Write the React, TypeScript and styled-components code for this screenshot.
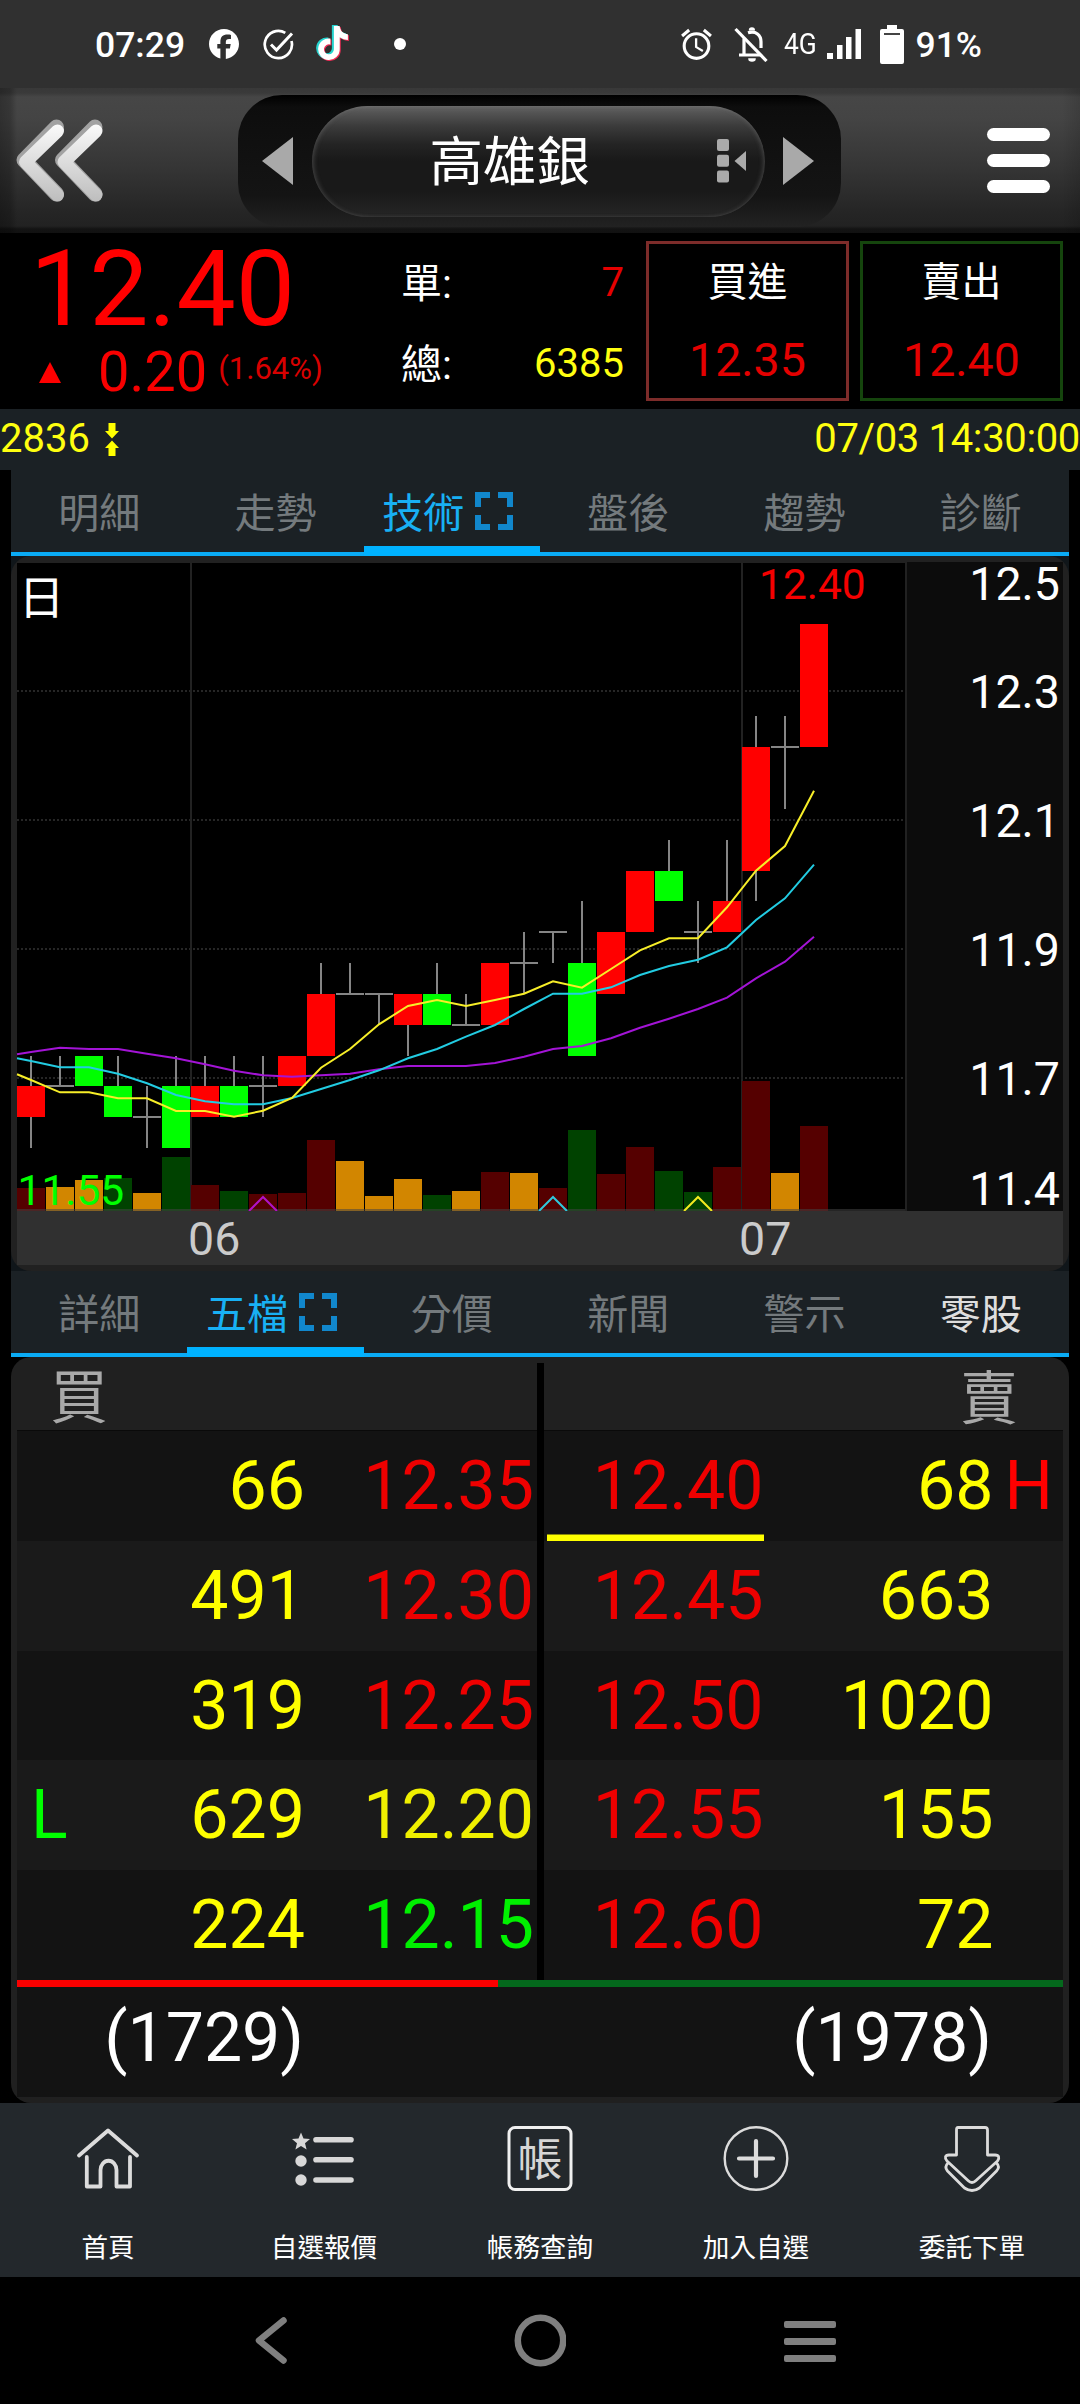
import React from 'react';
import styled, { createGlobalStyle } from 'styled-components';
import { FaFacebook, FaTiktok } from 'react-icons/fa6';
import { MdAlarm } from 'react-icons/md';

const RED = '#ff0000';
const GREEN = '#00ff00';
const YELLOW = '#ffff00';
const BLUE = '#00b2ff';

const GlobalStyle = createGlobalStyle`
  * { box-sizing: border-box; }
  body {
    margin: 0;
    background: #000;
    color: #fff;
    font-family: Roboto, 'Noto Sans CJK TC', sans-serif;
  }
  svg { display: block; flex: none; }
`;

const Screen = styled.div`
  width: 1080px;
  height: 2404px;
  display: flex;
  flex-direction: column;
  overflow: hidden;
  background: #000;
`;

/* ---------- status bar ---------- */

const StatusBar = styled.div`
  height: 88px;
  flex: none;
  background: #303030;
  display: flex;
  justify-content: space-between;
  align-items: center;
  padding: 0 98px 0 95px;
`;

const Notifications = styled.div`
  display: flex;
  align-items: center;
  gap: 24px;
`;

const Indicators = styled.div`
  display: flex;
  align-items: center;
`;

const Indicator = styled.div<{ $before: number }>`
  flex: none;
  margin-left: ${(p) => p.$before}px;
`;

const StatusText = styled.span`
  display: block;
  font-size: 35.5px;
  font-weight: 500;
  line-height: 44px;
  padding-top: 2px;
`;

const NetworkType = styled.span`
  display: block;
  width: 33px;
  font-size: 30px;
  line-height: 44px;
  transform: scaleX(0.88);
  transform-origin: left;
`;

const TikTokMark = styled.span`
  display: block;
  width: 34px;
  height: 36px;
  margin-left: -2px;
  font-size: 34px;
  line-height: 0;
  color: #fff;
  filter: drop-shadow(-1.5px -1px 0 #25d4cf) drop-shadow(1.5px 1px 0 #f02c56);
`;

const NotificationDot = styled.span`
  width: 12px;
  height: 12px;
  margin-left: 20px;
  border-radius: 50%;
  background: #fff;
`;

/* ---------- title bar ---------- */

const TitleBar = styled.header`
  height: 145px;
  flex: none;
  display: flex;
  align-items: center;
  padding: 0 30px 0 15px;
  background:
    linear-gradient(90deg, rgba(0, 0, 0, 0.3) 0, rgba(0, 0, 0, 0.22) 10px, transparent 17px, transparent 1062px, rgba(0, 0, 0, 0.12) 1080px),
    linear-gradient(180deg, #383838 0, #3a3a3a 5px, #464646 9px, #444 30px, #353535 80px, #252525 125px, #222 138px, #131313 141px, #111 145px);
`;

const Switcher = styled.div`
  width: 603px;
  height: 132px;
  margin: 1px 0 0 135px;
  display: flex;
  align-items: center;
  justify-content: space-between;
  padding: 0 27px 0 24px;
  border-radius: 44px;
  background: linear-gradient(180deg, #000 0, #0d0d0d 12px, #111 60px, #141414 100px, #222 132px);
`;

const SymbolPill = styled.div`
  width: 453px;
  height: 111px;
  display: flex;
  align-items: center;
  padding: 0 18px 0 118px;
  border-radius: 56px;
  background: linear-gradient(180deg, #666 0, #555 6px, #3b3b3b 20px, #242424 38px, #191919 55px, #191919 85px, #262626 111px);
  box-shadow: inset 3px 0 5px -2px rgba(150, 150, 150, 0.4), inset -3px 0 5px -2px rgba(150, 150, 150, 0.4);
`;

const SymbolName = styled.h1`
  margin: 3px 0 0;
  width: 288px;
  font-size: 53.5px;
  font-weight: 400;
  line-height: 64px;
`;

const MenuBars = styled.div`
  display: flex;
  flex-direction: column;
  gap: 13px;
  width: 63px;
  margin-left: auto;
  i {
    height: 13px;
    border-radius: 7px;
    background: #fff;
  }
`;

/* ---------- quote ---------- */

const Quote = styled.section`
  height: 176px;
  flex: none;
  display: flex;
`;

const PriceBlock = styled.div`
  width: 403px;
  display: flex;
  flex-direction: column;
`;

const LastPrice = styled.div`
  padding-left: 30px;
  font-size: 105.5px;
  line-height: 112px;
  color: ${RED};
`;

const ChangeRow = styled.div`
  height: 54px;
  display: flex;
  align-items: center;
  padding-left: 39px;
  color: #f80000;
`;

const Change = styled.span`
  margin-left: 37px;
  font-size: 56px;
  line-height: 54px;
`;

const Percent = styled.span`
  margin-left: 11px;
  padding-bottom: 7px;
  font-size: 31px;
  line-height: 40px;
  color: #d80000;
`;

const VolumeBlock = styled.div`
  width: 221px;
  padding-top: 9px;
`;

const VolumeRow = styled.div<{ $color: string }>`
  height: 81px;
  display: flex;
  align-items: center;
  justify-content: space-between;
  font-size: 40px;
  color: ${(p) => p.$color};
`;

const VolumeLabel = styled.span`
  margin: 0 0 5px -2px;
  font-size: 41px;
  color: #fff;
`;

const TradeButtons = styled.div`
  display: flex;
  gap: 11px;
  padding: 8px 0 0 22px;
`;

const TradeButton = styled.button<{ $edge: string }>`
  width: 203px;
  height: 160px;
  padding: 0;
  border: 3px solid ${(p) => p.$edge};
  background: #000;
  color: #fff;
  font-family: inherit;
  font-size: 40px;
  line-height: 78px;
  display: flex;
  flex-direction: column;
  align-items: center;
  b {
    font-weight: 400;
    font-size: 46.5px;
    line-height: 76px;
    color: #e40000;
  }
`;

const InfoBar = styled.div`
  height: 61px;
  flex: none;
  display: flex;
  align-items: center;
  padding-bottom: 2px;
  background: #1b2125;
  color: #ffff10;
  font-size: 40px;
  svg { margin: 2px auto 0 15px; }
`;

const QuoteTime = styled.span`
  letter-spacing: -0.35px;
`;

/* ---------- tabs ---------- */

const Tabs = styled.nav`
  height: 86px;
  flex: none;
  margin: 0 11px;
  display: grid;
  grid-template-columns: repeat(6, 1fr);
  background: #1b2125;
  box-shadow: inset 0 -4px 0 #0aabf5;
`;

const Tab = styled.div<{ $tone: 'dim' | 'active' | 'bright' }>`
  display: flex;
  align-items: center;
  justify-content: center;
  gap: 11px;
  padding: ${(p) => (p.$tone === 'active' ? '11px 8px 0 0' : '2px 0 0')};
  border-bottom: ${(p) => (p.$tone === 'active' ? `10px solid ${BLUE}` : '0')};
  font-size: 41px;
  line-height: 60px;
  font-weight: 400;
  color: ${(p) => ({ dim: '#747a7d', active: '#18b0f4', bright: '#dedede' })[p.$tone]};
  svg { margin-bottom: 5px; }
`;

/* ---------- chart ---------- */

const ChartFrame = styled.section`
  height: 715px;
  flex: none;
  margin: 0 11px;
  padding: 6px;
  display: grid;
  grid-template-columns: 890px 156px;
  grid-template-rows: 649px 54px;
  border-radius: 20px;
  background: #212121;
`;

const ChartBack = styled.div`
  flex: none;
  background: linear-gradient(90deg, #000 11px, #10161a 11px, #10161a 1069px, #000 1069px);
`;

const Plot = styled.svg`
  overflow: visible;
`;

const PriceAxis = styled.div`
  display: flex;
  flex-direction: column;
  align-items: flex-end;
  padding: 1px 3px 0 0;
  background: #0c0c0c;
  font-size: 46.5px;
`;

const AxisLabel = styled.span<{ $edge?: 'top' | 'bottom' }>`
  line-height: ${(p) => (p.$edge ? 43 : 129)}px;
  margin-bottom: ${(p) => (p.$edge === 'top' ? 22 : 0)}px;
  margin-top: ${(p) => (p.$edge === 'bottom' ? 'auto' : 0)};
`;

const DateAxis = styled.div`
  grid-column: 1 / -1;
  display: grid;
  grid-template-columns: 551px 1fr;
  padding-left: 171px;
  background: #303030;
  color: #cbcbcb;
  font-size: 46.5px;
  line-height: 56px;
`;

/* ---------- order book ---------- */

const BookFrame = styled.section`
  height: 746px;
  flex: none;
  margin: 0 11px;
  padding: 6px;
  border-radius: 20px;
  background: #202020;
`;

const BookSides = styled.div`
  display: grid;
  grid-template-columns: 1fr 1fr;
  column-gap: 7px;
  background: #000;
`;

const BookHead = styled.div<{ $side: 'bid' | 'ask' }>`
  height: 68px;
  display: flex;
  align-items: center;
  justify-content: ${(p) => (p.$side === 'bid' ? 'flex-start' : 'flex-end')};
  padding: ${(p) => (p.$side === 'bid' ? '2px 0 0 33px' : '4px 45px 0 0')};
  border-bottom: 1px solid #0a0a0a;
  background: #202020;
  color: #a9a9a9;
  font-size: 58px;
  line-height: 60px;
`;

const BookRow = styled.div<{ $side: 'bid' | 'ask'; $odd: boolean }>`
  display: grid;
  grid-template-columns: ${(p) => (p.$side === 'bid' ? '58px 230px 229px' : '3px 217px 230px 69px')};
  grid-template-rows: 100%;
  height: 109.8px;
  background: ${(p) => (p.$odd ? '#131313' : '#1a1a1a')};
  font-size: 68px;
  line-height: 111px;
`;

const Cell = styled.span<{ $color: string; $mark?: boolean }>`
  text-align: right;
  color: ${(p) => p.$color};
  box-shadow: ${(p) => (p.$mark ? 'inset 0 -6.5px 0 #ffff00' : 'none')};
`;

const Flag = styled.span<{ $color: string; $indent: number }>`
  color: ${(p) => p.$color};
  padding-left: ${(p) => p.$indent}px;
`;

const RatioBar = styled.div`
  height: 7px;
  display: flex;
  background: #04681c;
  i { background: #fb0000; }
`;

const Totals = styled.div`
  height: 110px;
  display: grid;
  grid-template-columns: 287px 688px;
  background: #131313;
  font-size: 68px;
  line-height: 103px;
  text-align: right;
`;

/* ---------- bottom bars ---------- */

const AppNav = styled.nav`
  height: 174px;
  flex: none;
  display: grid;
  grid-template-columns: repeat(5, 1fr);
  background: #23282c;
`;

const NavItem = styled.div`
  display: flex;
  flex-direction: column;
  align-items: center;
  padding-top: 20px;
  font-size: 26.6px;
  line-height: 40px;
  span { margin-top: 33px; }
`;

const SystemNav = styled.div`
  height: 127px;
  flex: none;
  display: flex;
  justify-content: center;
  gap: 218px;
  padding-top: 32px;
`;

/* ---------- icons ---------- */

const DoubleChevron = () => (
  <svg width="88" height="84" viewBox="0 0 88 84" fill="none" strokeLinecap="round" strokeLinejoin="round">
    <defs>
      <linearGradient id="steel" gradientUnits="userSpaceOnUse" x1="0" y1="0" x2="0" y2="84">
        <stop offset="0" stopColor="#ffffff" />
        <stop offset="1" stopColor="#bcbcbc" />
      </linearGradient>
    </defs>
    <g stroke="#a2a2a2" strokeWidth="15">
      <path d="M41.500 8 9 41 41.500 75" />
      <path d="M80 8 47.500 41 80 75" />
    </g>
    <g stroke="url(#steel)" strokeWidth="13">
      <path d="M42.500 12 10.500 43 42.500 76" />
      <path d="M81 12 49 43 81 76" />
    </g>
  </svg>
);

const Expand = () => (
  <svg width="38" height="38" viewBox="0 0 38 38" fill="none" stroke="#1187cc" strokeWidth="6">
    <path d="M3 15V3h12M23 3h12v12M35 23v12H23M15 35H3V23" />
  </svg>
);

const TaskCheck = () => (
  <svg width="31" height="31" viewBox="0 0 31 31" fill="none" stroke="#fff" strokeWidth="2.700">
    <path d="M22.300 3.800A13.600 13.600 0 1 0 28.500 12" />
    <path d="M8 15.500l5.500 5.500L29 4.500" strokeWidth="3" />
  </svg>
);

const BellOff = () => (
  <svg width="34" height="35" viewBox="0 0 34 35" fill="none" stroke="#fff" strokeWidth="3.200">
    <path d="M1.500 2 32.500 34" />
    <path d="M10 11.500V27M5 28h22" />
    <path d="M14 5.800c8-2.500 13 2.500 13 9V21" />
    <path d="M15.500 3.500a2.400 2.400 0 0 1 4.800 0M15 32a3 2 0 0 0 6 0z" fill="#fff" strokeWidth="1.500" />
  </svg>
);

const Signal = () => (
  <svg width="34" height="30" viewBox="0 0 34 30" fill="#fff">
    <path d="M0 24h6v6H0zM10 16h5.500v14H10zM19 8h5.500v22H19zM28.500 0H34v30h-5.500z" />
  </svg>
);

const Battery = () => (
  <svg width="24" height="39" viewBox="0 0 24 39">
    <path d="M7 0h10v4h5a2 2 0 0 1 2 2v31a2 2 0 0 1-2 2H2a2 2 0 0 1-2-2V6a2 2 0 0 1 2-2h5z" fill="#fff" />
    <path d="M4 9h16" stroke="#444" strokeWidth="2" />
  </svg>
);

const ListToggle = () => (
  <svg width="30" height="44" viewBox="0 0 30 44" fill="#aaa">
    <rect x="0" y="0" width="12" height="12" rx="2" />
    <rect x="0" y="15.700" width="12" height="12" rx="2" />
    <rect x="0" y="31.400" width="12" height="12" rx="2" />
    <path d="M29 12v20L17.500 22z" />
  </svg>
);

const NavSvg = ({ children }: { children: React.ReactNode }) => (
  <svg width="72" height="72" viewBox="0 0 72 72" fill="none" stroke="#dcdcdc" strokeWidth="3.800" strokeLinecap="round" strokeLinejoin="round">
    {children}
  </svg>
);

const navItems = [
  {
    label: '首頁',
    icon: (
      <NavSvg>
        <path d="M7 32.500 36 7.500l29 25" />
        <path d="M14.800 34v29.500H28.500V47a7.800 9 0 0 1 16 0v16.500H58V34" />
      </NavSvg>
    ),
  },
  {
    label: '自選報價',
    icon: (
      <NavSvg>
        <g fill="#d8d8d8" stroke="none">
          <path d="M13 9.500l2.500 6 6.500.5-5 4.200 1.600 6.300L13 23l-5.600 3.500L9 20.200 4 16l6.500-.5z" />
          <circle cx="13" cy="38" r="5.700" />
          <circle cx="13" cy="57" r="5.700" />
        </g>
        <path d="M28 16.700h35M28 36.700h35M28 57h35" strokeWidth="5.600" stroke="#d8d8d8" />
      </NavSvg>
    ),
  },
  {
    label: '帳務查詢',
    icon: (
      <NavSvg>
        <rect x="5" y="4.500" width="62" height="62" rx="6" strokeWidth="3" stroke="#f0f0f0" />
        <text x="36" y="52.500" textAnchor="middle" fontSize="45" fontWeight="400" fill="#d6d6d6" stroke="none" fontFamily="'Noto Sans CJK TC', sans-serif">
          帳
        </text>
      </NavSvg>
    ),
  },
  {
    label: '加入自選',
    icon: (
      <NavSvg>
        <circle cx="36" cy="35.500" r="31.300" strokeWidth="2.400" />
        <path d="M19 35.500h34M36 18v35" strokeWidth="4.200" />
      </NavSvg>
    ),
  },
  {
    label: '委託下單',
    icon: (
      <NavSvg>
        <g strokeWidth="2.800">
          <path d="M22 4.500h27q2.500 0 2.500 2.500v25H59q6 .5 2.500 6L40 57.500q-4 4-8 0L11 38q-4-5.500 2-6h7.500V7q0-2.500 1.500-2.500z" />
          <path d="M12 40q-4 4-.5 8l17 17q7.500 5 15 0l17-17q4-4 0-8" />
        </g>
      </NavSvg>
    ),
  },
];

/* ---------- chart data ---------- */

type Candle = {
  open: number;
  close: number;
  high: number;
  low: number;
  up: boolean;
  vol: number;
  tone: 'r' | 'g' | 'o';
};

// Levels are screen rows; subtracting TOP gives rows of the plot.
const TOP = 562;
const PLOT_H = 649;
const rows: [number, number, number, number, 0 | 1, number, 'r' | 'g' | 'o'][] = [
  [1086, 1117, 1056, 1148, 1, 1188, 'r'],
  [1086, 1086, 1056, 1086, 1, 1187, 'o'],
  [1056, 1086, 1056, 1086, 0, 1180, 'o'],
  [1086, 1117, 1056, 1117, 0, 1178, 'g'],
  [1117, 1117, 1086, 1148, 1, 1193, 'o'],
  [1086, 1148, 1056, 1148, 0, 1157, 'g'],
  [1086, 1117, 1056, 1117, 1, 1185, 'r'],
  [1086, 1117, 1056, 1117, 0, 1191, 'g'],
  [1086, 1086, 1056, 1117, 1, 1194, 'r'],
  [1056, 1086, 1056, 1086, 1, 1193, 'r'],
  [994, 1056, 963, 1056, 1, 1140, 'r'],
  [994, 994, 963, 994, 1, 1161, 'o'],
  [994, 994, 994, 1025, 1, 1196, 'o'],
  [994, 1025, 994, 1056, 1, 1179, 'o'],
  [994, 1025, 963, 1025, 0, 1195, 'g'],
  [1025, 1025, 994, 1025, 1, 1191, 'o'],
  [963, 1025, 963, 1025, 1, 1172, 'r'],
  [963, 963, 932, 994, 1, 1173, 'o'],
  [932, 932, 932, 963, 1, 1188, 'r'],
  [963, 1056, 901, 1056, 0, 1130, 'g'],
  [932, 994, 932, 994, 1, 1174, 'r'],
  [871, 932, 871, 932, 1, 1147, 'r'],
  [871, 901, 840, 901, 0, 1171, 'g'],
  [932, 932, 901, 963, 1, 1192, 'g'],
  [901, 932, 840, 932, 1, 1167, 'r'],
  [747, 871, 716, 901, 1, 1081, 'r'],
  [747, 747, 716, 809, 1, 1173, 'o'],
  [624, 747, 624, 747, 1, 1126, 'r'],
];

const candles: Candle[] = rows.map(([open, close, high, low, up, vol, tone]) => ({
  open: open - TOP,
  close: close - TOP,
  high: high - TOP,
  low: low - TOP,
  up: up === 1,
  vol: vol - TOP,
  tone,
}));

// The first value of each average is where its line enters at the left edge.
const averages = [
  {
    color: '#a314d6',
    ys: [1054.3, 1052, 1047.7, 1049, 1049, 1053.7, 1058.3, 1064.3, 1070.7, 1075.3, 1076.7, 1075.3, 1073.7, 1069.3, 1066, 1066, 1066, 1063, 1056.7, 1049, 1046, 1038.3, 1027.7, 1018.7, 1009, 997.7, 978.3, 961.7, 936.7],
  },
  {
    color: '#22cce2',
    ys: [1058.3, 1061, 1067.3, 1067.3, 1073.7, 1083.3, 1095, 1101.3, 1104.3, 1104.3, 1098, 1089, 1080, 1070.3, 1058.3, 1049, 1036.7, 1025, 1009, 993.7, 993.7, 987.3, 975, 966, 959.7, 947.3, 920, 898.3, 864.7],
  },
  {
    color: '#f7ee28',
    ys: [1074.3, 1080, 1092.3, 1092.3, 1098.3, 1098.3, 1111, 1111, 1116.7, 1110.7, 1098, 1067.7, 1049, 1024.3, 1006, 1000, 1006, 1000, 993.7, 981.3, 987.7, 969, 950.3, 938.3, 938.3, 907.3, 870.7, 846, 790.7],
  },
];

const STEP = 29;
const toPoints = (ys: number[]) => ys.map((y, i) => `${i === 0 ? 0 : 14 + STEP * (i - 1)},${y - TOP}`).join(' ');
const volumeColor = { r: '#550000', g: '#004200', o: '#d28600' };
const markers = [
  { index: 8, color: '#b012c8' },
  { index: 18, color: '#30c8dc' },
  { index: 23, color: '#f2ea20' },
];

const CandleChart = () => (
  <Plot width="890" height={PLOT_H} viewBox={`0 0 890 ${PLOT_H}`}>
    <rect y="1" width="888" height={PLOT_H - 1} fill="#000" />
    {[129, 258, 387, 516].map((y) => (
      <line key={y} x1="0" x2="888" y1={y} y2={y} stroke="#262626" strokeWidth="2" strokeDasharray="2 2" />
    ))}
    <path d={`M174 0V${PLOT_H}M725 0V${PLOT_H}`} stroke="#222" strokeWidth="2" />
    {candles.map((c, i) => (
      <rect key={i} x={STEP * i} y={c.vol} width="28" height={PLOT_H - c.vol} fill={volumeColor[c.tone]} />
    ))}
    {candles.map((c, i) => {
      const x = STEP * i;
      const flat = c.open === c.close;
      return (
        <g key={i}>
          <rect x={x + 13} y={c.high} width="2" height={c.low - c.high} fill="#858585" />
          <rect
            x={x}
            y={flat ? c.open - 1 : c.open}
            width="28"
            height={flat ? 2 : c.close - c.open}
            fill={flat ? '#858585' : c.up ? RED : GREEN}
          />
        </g>
      );
    })}
    {averages.map((a) => (
      <polyline key={a.color} points={toPoints(a.ys)} fill="none" stroke={a.color} strokeWidth="2" />
    ))}
    <rect y={PLOT_H - 2} width="888" height="2" fill="#444" fillOpacity="0.550" />
    {markers.map((m) => {
      const x = 14 + STEP * m.index;
      return (
        <path
          key={m.index}
          d={`M${x - 14} ${PLOT_H} L${x} ${PLOT_H - 14} L${x + 14} ${PLOT_H}`}
          fill="none"
          stroke={m.color}
          strokeWidth="2"
        />
      );
    })}
    <g fontFamily="Roboto, 'Noto Sans CJK TC', sans-serif">
      <text x="1.500" y="52" fontSize="46" fill="#fff">日</text>
      <text x="742" y="37" fontSize="42.500" fill="#f50000">12.40</text>
      <text x="0.500" y="643" fontSize="42.500" fill={GREEN}>11.55</text>
    </g>
  </Plot>
);

/* ---------- order data ---------- */

const bids = [
  { qty: '66', price: '12.35', color: '#ee0000' },
  { qty: '491', price: '12.30', color: '#ee0000' },
  { qty: '319', price: '12.25', color: '#ee0000' },
  { qty: '629', price: '12.20', color: '#f0f000', flag: 'L' },
  { qty: '224', price: '12.15', color: '#00f000' },
];

const asks = [
  { price: '12.40', qty: '68', flag: 'H', mark: true },
  { price: '12.45', qty: '663' },
  { price: '12.50', qty: '1020' },
  { price: '12.55', qty: '155' },
  { price: '12.60', qty: '72' },
];

const BID_SHARE = 0.46;

const TabStrip = ({ labels, active, bright }: { labels: string[]; active: number; bright?: number }) => (
  <Tabs>
    {labels.map((label, i) => (
      <Tab key={label} $tone={i === active ? 'active' : i === bright ? 'bright' : 'dim'}>
        {label}
        {i === active && <Expand />}
      </Tab>
    ))}
  </Tabs>
);

export default function App() {
  return (
    <Screen>
      <GlobalStyle />
      <StatusBar>
        <Notifications>
          <StatusText>07:29</StatusText>
          <FaFacebook size={30} />
          <TaskCheck />
          <TikTokMark>
            <FaTiktok />
          </TikTokMark>
          <NotificationDot />
        </Notifications>
        <Indicators>
          <MdAlarm size={37} />
          <Indicator $before={19}>
            <BellOff />
          </Indicator>
          <Indicator $before={16}>
            <NetworkType>4G</NetworkType>
          </Indicator>
          <Indicator $before={10}>
            <Signal />
          </Indicator>
          <Indicator $before={19}>
            <Battery />
          </Indicator>
          <Indicator $before={12}>
            <StatusText>91%</StatusText>
          </Indicator>
        </Indicators>
      </StatusBar>

      <TitleBar>
        <DoubleChevron />
        <Switcher>
          <svg width="31" height="48" viewBox="0 0 31 48">
            <path d="M31 0v48L0 24z" fill="#a9a9a9" />
          </svg>
          <SymbolPill>
            <SymbolName>高雄銀</SymbolName>
            <ListToggle />
          </SymbolPill>
          <svg width="31" height="48" viewBox="0 0 31 48">
            <path d="M0 0v48l31-24z" fill="#a9a9a9" />
          </svg>
        </Switcher>
        <MenuBars>
          <i />
          <i />
          <i />
        </MenuBars>
      </TitleBar>

      <Quote>
        <PriceBlock>
          <LastPrice>12.40</LastPrice>
          <ChangeRow>
            <svg width="22" height="21" viewBox="0 0 22 21">
              <path d="M11 0 22 21H0z" fill={RED} />
            </svg>
            <Change>0.20</Change>
            <Percent>(1.64%)</Percent>
          </ChangeRow>
        </PriceBlock>
        <VolumeBlock>
          <VolumeRow $color="#e60000">
            <VolumeLabel>單:</VolumeLabel>
            <span>7</span>
          </VolumeRow>
          <VolumeRow $color="#ffff10">
            <VolumeLabel>總:</VolumeLabel>
            <span>6385</span>
          </VolumeRow>
        </VolumeBlock>
        <TradeButtons>
          <TradeButton $edge="#7d2c2a">
            買進<b>12.35</b>
          </TradeButton>
          <TradeButton $edge="#15450d">
            賣出<b>12.40</b>
          </TradeButton>
        </TradeButtons>
      </Quote>

      <InfoBar>
        <span>2836</span>
        <svg width="14" height="33" viewBox="0 0 14 33" fill={YELLOW}>
          <path d="M3.500 0h7v8H14L7 15.500 0 8h3.500zM3.500 33h7v-8H14L7 17.500 0 25h3.500z" />
        </svg>
        <QuoteTime>07/03 14:30:00</QuoteTime>
      </InfoBar>

      <TabStrip labels={['明細', '走勢', '技術', '盤後', '趨勢', '診斷']} active={2} />

      <ChartBack>
        <ChartFrame>
          <CandleChart />
          <PriceAxis>
            <AxisLabel $edge="top">12.5</AxisLabel>
            <AxisLabel>12.3</AxisLabel>
            <AxisLabel>12.1</AxisLabel>
            <AxisLabel>11.9</AxisLabel>
            <AxisLabel>11.7</AxisLabel>
            <AxisLabel $edge="bottom">11.4</AxisLabel>
          </PriceAxis>
          <DateAxis>
            <span>06</span>
            <span>07</span>
          </DateAxis>
        </ChartFrame>
      </ChartBack>

      <TabStrip labels={['詳細', '五檔', '分價', '新聞', '警示', '零股']} active={1} bright={5} />

      <BookFrame>
        <BookSides>
          <div>
            <BookHead $side="bid">買</BookHead>
            {bids.map((b, i) => (
              <BookRow key={b.price} $side="bid" $odd={i % 2 === 0}>
                <Flag $color={GREEN} $indent={14}>{b.flag}</Flag>
                <Cell $color={YELLOW}>{b.qty}</Cell>
                <Cell $color={b.color}>{b.price}</Cell>
              </BookRow>
            ))}
          </div>
          <div>
            <BookHead $side="ask">賣</BookHead>
            {asks.map((a, i) => (
              <BookRow key={a.price} $side="ask" $odd={i % 2 === 0}>
                <span />
                <Cell $color="#ee0000" $mark={a.mark}>{a.price}</Cell>
                <Cell $color={YELLOW}>{a.qty}</Cell>
                <Flag $color={RED} $indent={11}>{a.flag}</Flag>
              </BookRow>
            ))}
          </div>
        </BookSides>
        <RatioBar>
          <i style={{ width: `${BID_SHARE * 100}%` }} />
        </RatioBar>
        <Totals>
          <span>(1729)</span>
          <span>(1978)</span>
        </Totals>
      </BookFrame>

      <AppNav>
        {navItems.map((item) => (
          <NavItem key={item.label}>
            {item.icon}
            <span>{item.label}</span>
          </NavItem>
        ))}
      </AppNav>

      <SystemNav>
        <svg width="52" height="62" viewBox="0 0 52 62" fill="none" stroke="#7f7f7f" strokeWidth="6.500" strokeLinecap="round" strokeLinejoin="round">
          <path d="M39.500 11.500 15 31.500l24.500 20" />
        </svg>
        <svg width="52" height="62" viewBox="0 0 52 62" fill="none" stroke="#7f7f7f" strokeWidth="6.500">
          <circle cx="26.500" cy="31.500" r="22.700" />
        </svg>
        <svg width="52" height="62" viewBox="0 0 52 62" fill="#7f7f7f">
          <rect y="12" width="52" height="7" rx="2" />
          <rect y="29" width="52" height="7" rx="2" />
          <rect y="46" width="52" height="7" rx="2" />
        </svg>
      </SystemNav>
    </Screen>
  );
}
